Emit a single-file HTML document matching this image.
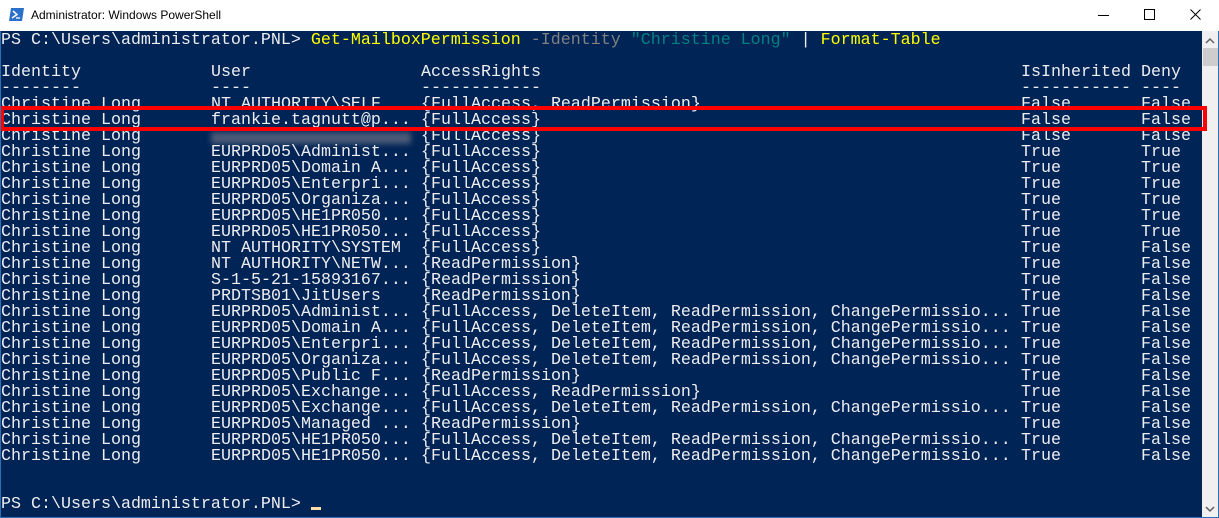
<!DOCTYPE html>
<html><head><meta charset="utf-8"><style>
body{margin:0;width:1219px;height:518px;overflow:hidden;background:#fff;position:relative;font-family:"Liberation Sans",sans-serif}
.title{position:absolute;left:0;top:0;width:1219px;height:31px;background:#fff}
.title .t{position:absolute;left:31px;top:8px;font-size:12px;color:#000}
.con{position:absolute;left:1px;top:31px;width:1201px;height:486px;background:#012456;font-family:"Liberation Mono",monospace;font-size:16.67px;color:#eeedf0}
.w{position:absolute;left:0;top:2px;width:1201px;height:480px}
.r{position:absolute;left:0;height:16px;line-height:16px;white-space:pre;width:1201px}
.r span{position:absolute;top:0}
.a{left:0}.b{left:210px}.c{left:420px}.d{left:1020px}.e{left:1140px}
.sb{position:absolute;left:1202px;top:31px;width:16px;height:486px;background:#f0f0f0}
.y{color:#ffff00}.g{color:#808080}.s{color:#008080}
</style></head><body>
<div class="title">
<svg style="position:absolute;left:9px;top:8px" width="15" height="13" viewBox="0 0 15 13"><path d="M2 0H15L13 13H0Z" fill="#2a6fc9"/><path d="M4 3L8 6.5L3 10" stroke="#fff" stroke-width="1.5" fill="none"/><path d="M7 10H11" stroke="#fff" stroke-width="1.3"/></svg>
<div class="t">Administrator: Windows PowerShell</div>
<svg style="position:absolute;left:1098px;top:9px" width="12" height="12"><path d="M0 6.5H11" stroke="#000"/></svg>
<svg style="position:absolute;left:1144px;top:9px" width="12" height="12"><rect x="0.5" y="0.5" width="10" height="10" fill="none" stroke="#000"/></svg>
<svg style="position:absolute;left:1190px;top:9px" width="12" height="12"><path d="M0.5 0.5L10.5 10.5M10.5 0.5L0.5 10.5" stroke="#000"/></svg>
</div>
<div class="con"><div class="w">
<div class="r" style="top:0">PS C:\Users\administrator.PNL&gt; <span style="position:static" class="y">Get-MailboxPermission</span> <span style="position:static" class="g">-Identity</span> <span style="position:static" class="s">"Christine Long"</span> | <span style="position:static" class="y">Format-Table</span></div>
<div class="r" style="top:32px"><span class="a">Identity</span><span class="b">User</span><span class="c">AccessRights</span><span class="d">IsInherited</span><span class="e">Deny</span></div>
<div class="r" style="top:48px"><span class="a">--------</span><span class="b">----</span><span class="c">------------</span><span class="d">-----------</span><span class="e">----</span></div>
<div class="r" style="top:64px"><span class="a">Christine Long</span><span class="b">NT AUTHORITY\SELF</span><span class="c">{FullAccess, ReadPermission}</span><span class="d">False</span><span class="e">False</span></div>
<div class="r" style="top:80px"><span class="a">Christine Long</span><span class="b">frankie.tagnutt@p...</span><span class="c">{FullAccess}</span><span class="d">False</span><span class="e">False</span></div>
<div class="r" style="top:96px"><span class="a">Christine Long</span><span class="b" style="top:3px;width:200px;height:12px;background:#4a5a78;filter:blur(3px)"></span><span class="c">{FullAccess}</span><span class="d">False</span><span class="e">False</span></div>
<div class="r" style="top:112px"><span class="a">Christine Long</span><span class="b">EURPRD05\Administ...</span><span class="c">{FullAccess}</span><span class="d">True</span><span class="e">True</span></div>
<div class="r" style="top:128px"><span class="a">Christine Long</span><span class="b">EURPRD05\Domain A...</span><span class="c">{FullAccess}</span><span class="d">True</span><span class="e">True</span></div>
<div class="r" style="top:144px"><span class="a">Christine Long</span><span class="b">EURPRD05\Enterpri...</span><span class="c">{FullAccess}</span><span class="d">True</span><span class="e">True</span></div>
<div class="r" style="top:160px"><span class="a">Christine Long</span><span class="b">EURPRD05\Organiza...</span><span class="c">{FullAccess}</span><span class="d">True</span><span class="e">True</span></div>
<div class="r" style="top:176px"><span class="a">Christine Long</span><span class="b">EURPRD05\HE1PR050...</span><span class="c">{FullAccess}</span><span class="d">True</span><span class="e">True</span></div>
<div class="r" style="top:192px"><span class="a">Christine Long</span><span class="b">EURPRD05\HE1PR050...</span><span class="c">{FullAccess}</span><span class="d">True</span><span class="e">True</span></div>
<div class="r" style="top:208px"><span class="a">Christine Long</span><span class="b">NT AUTHORITY\SYSTEM</span><span class="c">{FullAccess}</span><span class="d">True</span><span class="e">False</span></div>
<div class="r" style="top:224px"><span class="a">Christine Long</span><span class="b">NT AUTHORITY\NETW...</span><span class="c">{ReadPermission}</span><span class="d">True</span><span class="e">False</span></div>
<div class="r" style="top:240px"><span class="a">Christine Long</span><span class="b">S-1-5-21-15893167...</span><span class="c">{ReadPermission}</span><span class="d">True</span><span class="e">False</span></div>
<div class="r" style="top:256px"><span class="a">Christine Long</span><span class="b">PRDTSB01\JitUsers</span><span class="c">{ReadPermission}</span><span class="d">True</span><span class="e">False</span></div>
<div class="r" style="top:272px"><span class="a">Christine Long</span><span class="b">EURPRD05\Administ...</span><span class="c">{FullAccess, DeleteItem, ReadPermission, ChangePermissio...</span><span class="d">True</span><span class="e">False</span></div>
<div class="r" style="top:288px"><span class="a">Christine Long</span><span class="b">EURPRD05\Domain A...</span><span class="c">{FullAccess, DeleteItem, ReadPermission, ChangePermissio...</span><span class="d">True</span><span class="e">False</span></div>
<div class="r" style="top:304px"><span class="a">Christine Long</span><span class="b">EURPRD05\Enterpri...</span><span class="c">{FullAccess, DeleteItem, ReadPermission, ChangePermissio...</span><span class="d">True</span><span class="e">False</span></div>
<div class="r" style="top:320px"><span class="a">Christine Long</span><span class="b">EURPRD05\Organiza...</span><span class="c">{FullAccess, DeleteItem, ReadPermission, ChangePermissio...</span><span class="d">True</span><span class="e">False</span></div>
<div class="r" style="top:336px"><span class="a">Christine Long</span><span class="b">EURPRD05\Public F...</span><span class="c">{ReadPermission}</span><span class="d">True</span><span class="e">False</span></div>
<div class="r" style="top:352px"><span class="a">Christine Long</span><span class="b">EURPRD05\Exchange...</span><span class="c">{FullAccess, ReadPermission}</span><span class="d">True</span><span class="e">False</span></div>
<div class="r" style="top:368px"><span class="a">Christine Long</span><span class="b">EURPRD05\Exchange...</span><span class="c">{FullAccess, DeleteItem, ReadPermission, ChangePermissio...</span><span class="d">True</span><span class="e">False</span></div>
<div class="r" style="top:384px"><span class="a">Christine Long</span><span class="b">EURPRD05\Managed ...</span><span class="c">{ReadPermission}</span><span class="d">True</span><span class="e">False</span></div>
<div class="r" style="top:400px"><span class="a">Christine Long</span><span class="b">EURPRD05\HE1PR050...</span><span class="c">{FullAccess, DeleteItem, ReadPermission, ChangePermissio...</span><span class="d">True</span><span class="e">False</span></div>
<div class="r" style="top:416px"><span class="a">Christine Long</span><span class="b">EURPRD05\HE1PR050...</span><span class="c">{FullAccess, DeleteItem, ReadPermission, ChangePermissio...</span><span class="d">True</span><span class="e">False</span></div>
<div class="r" style="top:464px">PS C:\Users\administrator.PNL&gt; </div>
</div>
<div style="position:absolute;left:310px;top:476px;width:10px;height:3px;background:#fedba9"></div>
</div>
<div class="sb">
<svg style="position:absolute;left:3px;top:6px" width="10" height="8"><path d="M1 6L5 2L9 6" stroke="#606060" stroke-width="1.5" fill="none"/></svg>
<div style="position:absolute;left:1px;top:17px;width:15px;height:18px;background:#cdcdcd"></div>
<svg style="position:absolute;left:3px;top:474px" width="10" height="8"><path d="M1 2L5 6L9 2" stroke="#606060" stroke-width="1.5" fill="none"/></svg>
</div>
<div style="position:absolute;left:0;top:106px;width:1207px;height:25px;border:4px solid #ff0000;box-sizing:border-box"></div>
<div style="position:absolute;left:0;top:31px;width:1px;height:487px;background:#2b6fb6"></div>
<div style="position:absolute;left:0;top:517px;width:1219px;height:1px;background:#2b6fb6"></div>
<div style="position:absolute;left:1218px;top:31px;width:1px;height:487px;background:#2b6fb6"></div>
</body></html>
